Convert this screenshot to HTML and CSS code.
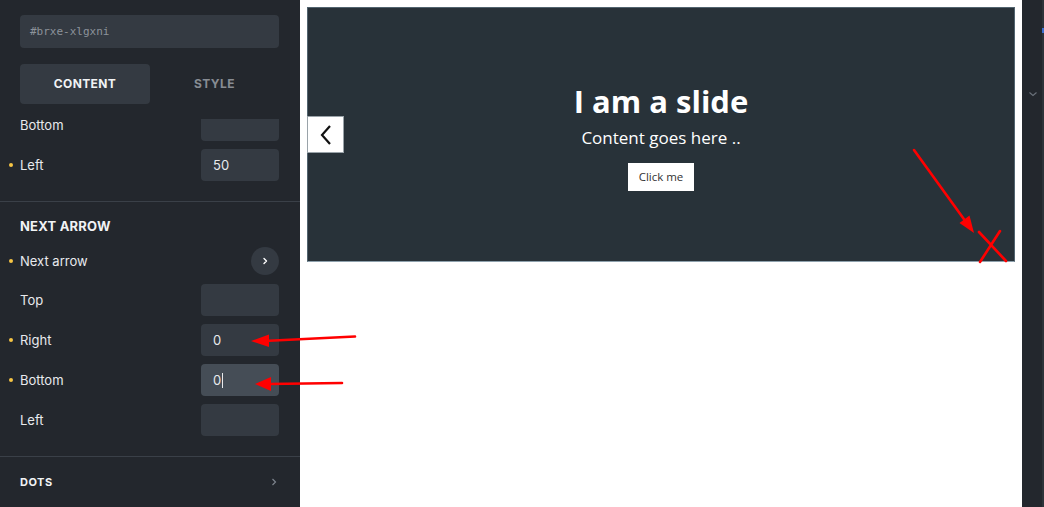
FILE: index.html
```html
<!DOCTYPE html>
<html lang="en">
<head>
    <meta charset="UTF-8">
    <meta name="viewport" content="width=device-width, initial-scale=1.0">
    <title>Slider - Builder</title>
    <link rel="stylesheet" href="styles.css">
</head>
<body>
    <aside class="panel">
        <div class="id-field">#brxe-xlgxni</div>
        <div class="tabs">
            <div class="tab active">CONTENT</div>
            <div class="tab">STYLE</div>
        </div>

        <div class="scroller">
            <div class="group first">
                <div class="row">
                    <span class="label">Bottom</span>
                    <input class="field clipped" type="text" value="">
                </div>
                <div class="row set">
                    <span class="label">Left</span>
                    <input class="field" type="text" value="50">
                </div>
            </div>

            <div class="group">
                <h3 class="group-title">NEXT ARROW</h3>
                <div class="row set">
                    <span class="label">Next arrow</span>
                    <button class="icon-btn">
                        <svg width="12" height="12" viewBox="0 0 12 12"><path d="M5 3.5l2.5 2.5L5 8.5" fill="none" stroke="#fff" stroke-width="1.4" stroke-linecap="round" stroke-linejoin="round"/></svg>
                    </button>
                </div>
                <div class="row">
                    <span class="label">Top</span>
                    <input class="field" type="text" value="">
                </div>
                <div class="row set">
                    <span class="label">Right</span>
                    <input class="field" type="text" value="0">
                </div>
                <div class="row set">
                    <span class="label">Bottom</span>
                    <div class="field focus">0<span class="caret"></span></div>
                </div>
                <div class="row">
                    <span class="label">Left</span>
                    <input class="field" type="text" value="">
                </div>
            </div>

            <div class="group closed">
                <h3 class="group-title small">DOTS</h3>
                <svg width="10" height="10" viewBox="0 0 10 10"><path d="M3.5 2l3 3-3 3" fill="none" stroke="#7c838c" stroke-width="1.2"/></svg>
            </div>
        </div>
    </aside>

    <main class="canvas">
        <section class="slider">
            <button class="prev">
                <svg width="14" height="22" viewBox="0 0 14 22"><path d="M11 2L3 11l8 9" fill="none" stroke="#111" stroke-width="2.2"/></svg>
            </button>
            <div class="slide">
                <h2>I am a slide</h2>
                <p>Content goes here ..</p>
                <a class="slide-btn" href="#">Click me</a>
            </div>
        </section>
    </main>

    <div class="structure">
        <span class="blip"></span>
        <svg class="caret-down" width="10" height="8" viewBox="0 0 10 8"><path d="M1.5 2.5l3.5 3 3.5-3" fill="none" stroke="#6b727b" stroke-width="1.1"/></svg>
    </div>

    <!-- red markers pointing at the edited fields and the arrow position -->
    <svg class="marks" width="1044" height="507" viewBox="0 0 1044 507">
        <g stroke="#f00" stroke-width="2.6" fill="none" stroke-linecap="round">
            <path d="M355 336.5L264 341"/>
            <path d="M342 383L268 384"/>
            <path d="M914 150L966 222"/>
            <path d="M979 232L1006 261"/>
            <path d="M1000 231L980 262"/>
        </g>
        <g fill="#f00">
            <path d="M251 341L269 334.5L269 347Z"/>
            <path d="M255 384L271 377L271 391Z"/>
            <path d="M974 233L959.5 223L969.5 215.5Z"/>
        </g>
    </svg>
</body>
</html>
```

FILE: styles.css
```css
* {
    box-sizing: border-box;
}
body {
    margin: 0;
    width: 1044px;
    height: 507px;
    overflow: hidden;
    display: flex;
    font-family: Inter, "Noto Sans", sans-serif;
    background: #fff;
    position: relative;
}

/* left control panel */
.panel {
    width: 300px;
    flex: none;
    background: #23272d;
    color: #eceef1;
    display: flex;
    flex-direction: column;
    padding-top: 15px;
}
.id-field {
    margin: 0 21px 0 20px;
    height: 33px;
    border-radius: 4px;
    background: #343a42;
    color: #8d939b;
    font-family: "DejaVu Sans Mono", "Liberation Mono", monospace;
    font-size: 11px;
    line-height: 33px;
    padding-left: 10px;
}
.tabs {
    margin: 16px 21px 0 20px;
    display: grid;
    grid-template-columns: 130px 1fr;
    height: 40px;
}
.tab {
    display: flex;
    align-items: center;
    justify-content: center;
    font-size: 12px;
    font-weight: 700;
    letter-spacing: 0.4px;
    color: #878c93;
    border-radius: 4px;
    padding-bottom: 1px;
}
.tab.active {
    background: #343a42;
    color: #f1f3f5;
}
.scroller {
    flex: 1;
    overflow: hidden;
    margin-top: 1px;
}
.group {
    padding: 0 21px 16px 20px;
    border-bottom: 1px solid #3a4048;
}
.group-title {
    margin: 0;
    padding-top: 14px;
    height: 39px;
    line-height: 20px;
    font-size: 13px;
    font-weight: 700;
    letter-spacing: 0.2px;
    color: #f1f3f5;
}
.group-title + .row {
    margin-bottom: -1px;
}
.group.closed {
    border-bottom: none;
    display: flex;
    align-items: center;
    justify-content: space-between;
    height: 50px;
    padding: 0 21px 0 20px;
}
.group-title.small {
    padding: 0;
    height: auto;
    font-size: 11px;
    letter-spacing: 0.5px;
}
.row {
    height: 40px;
    display: flex;
    align-items: center;
    justify-content: space-between;
    position: relative;
}
.row.set::before {
    content: "";
    position: absolute;
    left: -11px;
    top: 18px;
    width: 4px;
    height: 4px;
    border-radius: 50%;
    background: #f6c544;
}
.label {
    font-size: 13px;
    color: #e8eaed;
}
.field {
    width: 78px;
    height: 32px;
    border: none;
    border-radius: 4px;
    background: #343a42;
    color: #e8eaed;
    font-family: Inter, "Noto Sans", sans-serif;
    font-size: 13px;
    padding: 0 12px;
    outline: none;
    display: flex;
    align-items: center;
}
/* field partly scrolled under the tabs */
.field.clipped {
    height: 22px;
    align-self: flex-end;
    margin-bottom: 4px;
    border-radius: 0 0 4px 4px;
}
.field.focus {
    background: #454d56;
}
.caret {
    display: inline-block;
    width: 1px;
    height: 15px;
    background: #e8eaed;
    margin-left: 1px;
}
.icon-btn {
    width: 28px;
    height: 28px;
    border: none;
    border-radius: 50%;
    background: #343a42;
    display: flex;
    align-items: center;
    justify-content: center;
    padding: 0;
}

/* preview canvas */
.canvas {
    width: 722px;
    flex: none;
    padding: 7px 7px 0 7px;
    background: #fff;
}
.slider {
    height: 255px;
    background: #283239;
    border: 1px solid #52646f;
    border-bottom-color: #8ea1ad;
    display: flex;
    align-items: center;
    justify-content: center;
    position: relative;
}
.prev {
    position: absolute;
    left: -1px;
    top: 108px;
    width: 37px;
    height: 37px;
    background: #fff;
    border: 1px solid #9aa3a9;
    display: flex;
    align-items: center;
    justify-content: center;
    padding: 0;
}
.slide {
    text-align: center;
    color: #fff;
    font-family: "Open Sans", "Liberation Sans", sans-serif;
    margin-top: 2px;
}
.slide h2 {
    margin: 0 0 5px;
    font-size: 31px;
    font-weight: 700;
    line-height: 40px;
}
.slide p {
    margin: 0 0 13px;
    font-size: 17px;
    line-height: 24px;
}
.slide-btn {
    display: inline-block;
    background: #fff;
    color: #333;
    font-size: 11.5px;
    text-decoration: none;
    padding: 0 11px;
    line-height: 28px;
    height: 28px;
}

/* right structure strip */
.structure {
    flex: 1;
    background: #23272d;
    border-right: 2px solid #2d3339;
    position: relative;
}
.blip {
    position: absolute;
    right: -2px;
    top: 28px;
    width: 2px;
    height: 5px;
    background: #3d6fd1;
}
.caret-down {
    position: absolute;
    left: 6px;
    top: 90px;
}

.marks {
    position: absolute;
    left: 0;
    top: 0;
    pointer-events: none;
}
```
